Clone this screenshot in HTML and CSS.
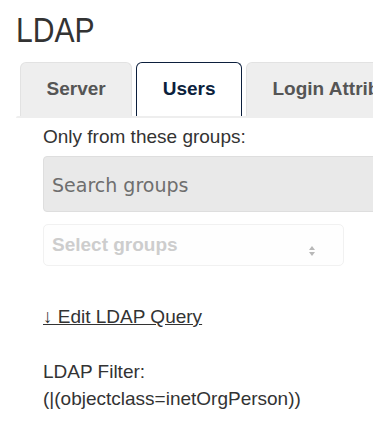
FILE: index.html
```html
<!DOCTYPE html>
<html lang="en">
<head>
  <meta charset="UTF-8" />
  <meta name="viewport" content="width=device-width, initial-scale=1.0" />
  <title>LDAP</title>
  <link rel="stylesheet" href="styles.css">
</head>
<body>
  <div class="page">
    <h1 class="title">LDAP</h1>

    <div class="tabs">
      <div class="tab">Server</div>
      <div class="tab active">Users</div>
      <div class="tab">Login Attributes</div>
    </div>

    <div class="panel">
      <div class="label">Only from these groups:</div>
      <input type="text" class="search" placeholder="Search groups">
      <div class="select">
        <span class="select-text">Select groups</span>
        <svg class="arrows" width="6" height="10" viewBox="0 0 6 10">
          <path d="M3 0 L6 4 L0 4 Z" fill="#b8b8b8" />
          <path d="M0 6 L6 6 L3 10 Z" fill="#b8b8b8" />
        </svg>
      </div>
      <a class="edit-link" href="#">&darr; Edit LDAP Query</a>
      <div class="filter">
        LDAP Filter:<br>
        (|(objectclass=inetOrgPerson))
      </div>
    </div>
  </div>
</body>
</html>
```

FILE: styles.css
```css
* { margin: 0; padding: 0; box-sizing: border-box; }
html, body {
  width: 373px;
  height: 438px;
  overflow: hidden;
  background: #fff;
  font-family: "Liberation Sans", Arial, sans-serif;
  color: #333;
}
.page {
  padding: 10px 0 0 16px;
}
.title {
  display: inline-block;
  font-weight: normal;
  font-size: 35px;
  line-height: 40px;
  color: #333;
  margin-bottom: 12px;
  transform: scaleX(0.86);
  transform-origin: left center;
}
.tabs {
  display: flex;
  gap: 4px;
  padding-left: 4px;
  white-space: nowrap;
}
.tab {
  flex: none;
  height: 54px;
  padding: 0 25.5px;
  line-height: 52px;
  font-size: 19px;
  font-weight: bold;
  color: #555;
  background: #eee;
  border: 1px solid #e2e2e2;
  border-bottom: none;
  border-radius: 6px 6px 0 0;
}
.tab.active {
  background: #fff;
  color: #0c1f3d;
  border-color: #0c1f3d;
}
.panel {
  border-top: 2px solid #eee;
  border-top-left-radius: 2px;
  padding: 5px 0 0 27px;
  font-size: 19px;
  line-height: 27.5px;
}
.label {
  margin-bottom: 5.5px;
}
.search {
  display: block;
  width: 400px;
  height: 56px;
  padding: 2px 8px 0;
  font-family: "DejaVu Sans", sans-serif;
  font-size: 19px;
  color: #333;
  background: #e9e9e9;
  border: 1px solid #dedede;
  border-radius: 4px;
}
.search::placeholder {
  color: #6e6e6e;
}
.select {
  display: flex;
  justify-content: space-between;
  align-items: flex-end;
  width: 301px;
  height: 42px;
  margin-top: 12px;
  padding: 0 28px 9px 8px;
  background: #fefefe;
  border: 1px solid #f1f1f1;
  border-radius: 5px;
}
.select-text {
  align-self: center;
  line-height: 40px;
  margin-bottom: -9px;
  font-weight: bold;
  color: #cdcdcd;
}
.arrows {
  display: block;
}
.edit-link {
  display: inline-block;
  margin-top: 37px;
  color: #333;
  text-decoration: underline;
}
.filter {
  margin-top: 27px;
}
```
